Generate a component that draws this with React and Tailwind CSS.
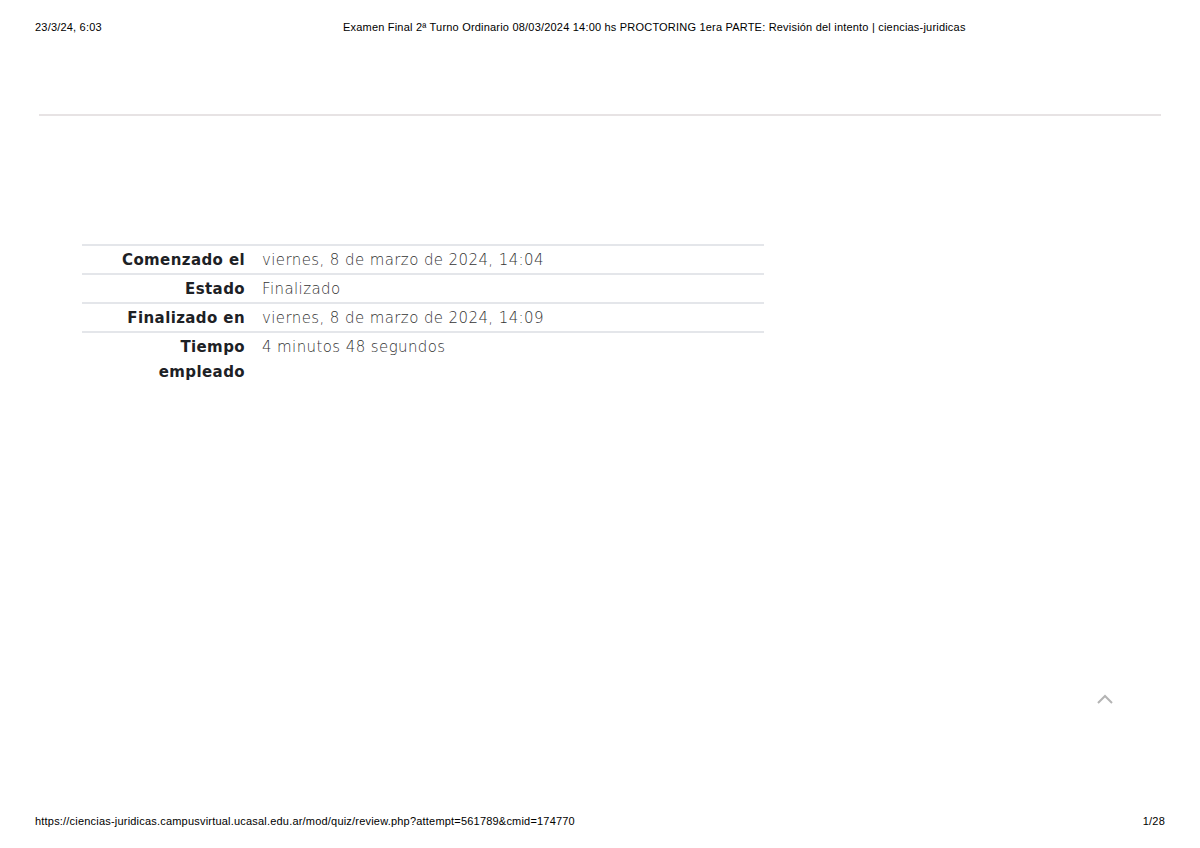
export default function App() {
  const rows = [
    ["Comenzado el", "viernes, 8 de marzo de 2024, 14:04"],
    ["Estado", "Finalizado"],
    ["Finalizado en", "viernes, 8 de marzo de 2024, 14:09"],
    ["Tiempo empleado", "4 minutos 48 segundos"],
  ];
  return (
    <div className="w-[1200px] h-[848px] bg-white relative flex flex-col text-[#1d1d1d]">
      <div className="flex items-start h-[40px] pt-[19px] px-[35px] text-[11px] text-black tracking-[0.2px]" style={{ fontFamily: '"Liberation Sans", Arial, sans-serif' }}>
        <div className="w-[308px]">23/3/24, 6:03</div>
        <div>Examen Final 2ª Turno Ordinario 08/03/2024 14:00 hs PROCTORING 1era PARTE: Revisión del intento | ciencias-juridicas</div>
      </div>
      <div className="mt-[74px] mx-[39px] h-[2px] bg-[#e7e3e4]" />
      <div className="mt-[128px] ml-[82px] w-[682px]" style={{ fontFamily: '"DejaVu Sans", Lato, sans-serif' }}>
        {rows.map(([k, v], i) => (
          <div key={i} className="flex border-t-2 border-[#e4e6ea]">
            <div className="w-[163px] text-right font-bold text-[15px] leading-[25px] pt-[2px] text-[#1d2125] tracking-[0.4px]">
              {i === 3 ? (<>Tiempo<br />empleado</>) : k}
            </div>
            <div className="pl-[17px] text-[15px] leading-[25px] pt-[2px] text-[#333333] font-extralight tracking-[0.4px]">{v}</div>
          </div>
        ))}
      </div>
      <div className="absolute left-[1096px] top-[693px]">
        <svg width="18" height="12" viewBox="0 0 18 12"><path d="M2 10 L9 3 L16 10" fill="none" stroke="#b4b4b4" strokeWidth="2" /></svg>
      </div>
      <div className="mt-auto mb-[19px] px-[35px] flex justify-between text-[11px] text-black tracking-[0.2px]" style={{ fontFamily: '"Liberation Sans", Arial, sans-serif' }}>
        <div>https://ciencias-juridicas.campusvirtual.ucasal.edu.ar/mod/quiz/review.php?attempt=561789&amp;cmid=174770</div>
        <div>1/28</div>
      </div>
    </div>
  );
}
